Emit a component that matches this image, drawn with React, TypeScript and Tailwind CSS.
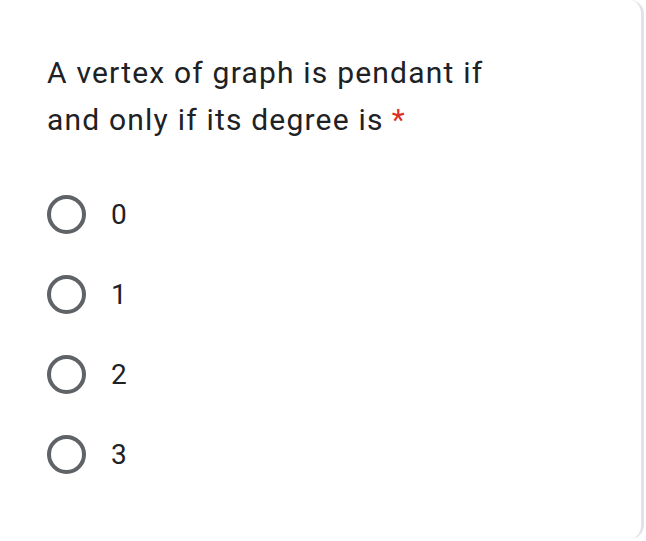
const options = ['0', '1', '2', '3'];

function Radio() {
  return <div className="w-[39px] h-[39px] rounded-full border-[4px] border-[#5f6368] shrink-0" />;
}

export default function App() {
  return (
    <div className="w-[646px] h-[541px] bg-white overflow-hidden" style={{ fontFamily: 'Roboto, "Noto Sans", sans-serif' }}>
      <div className="w-[644px] h-[539px] bg-white rounded-r-[14px] border-r-[3px] border-[#e3e3e6] pl-[47px] pt-[49px]">
        <div className="text-[30px] leading-[47px] tracking-[1.2px] text-[#202124]">
          A vertex of graph is pendant if
          <br />
          and only if its degree is
          <span className="text-[#d93025] ml-[8px]">*</span>
        </div>
        <div className="mt-[52px] flex flex-col gap-[41px]">
          {options.map((o) => (
            <div key={o} className="flex items-center gap-[25px]">
              <Radio />
              <span className="text-[28px] leading-[39px] tracking-[0.5px] text-[#202124]">{o}</span>
            </div>
          ))}
        </div>
      </div>
    </div>
  );
}
